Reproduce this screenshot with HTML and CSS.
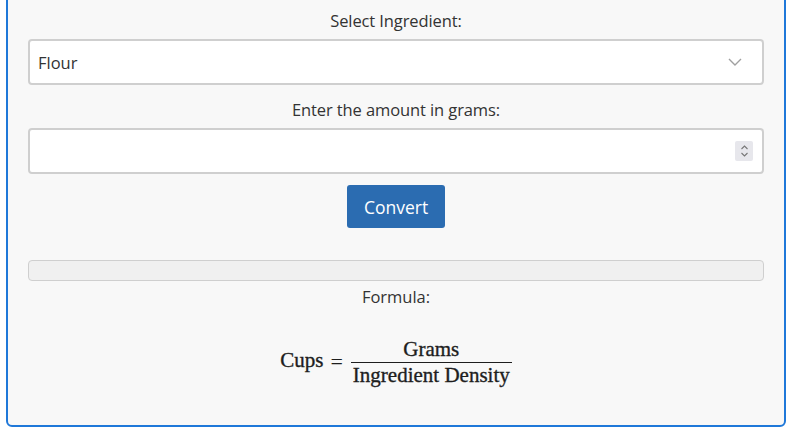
FILE: index.html
```html
<!DOCTYPE html>
<html lang="en">
<head>
<meta charset="utf-8">
<title>Grams to Cups</title>
<link rel="stylesheet" href="styles.css">
</head>
<body>
<div class="card">
  <label class="label" for="ingredient">Select Ingredient:</label>
  <div class="field">
    <select id="ingredient" class="field-control">
      <option>Flour</option>
      <option>Sugar</option>
      <option>Butter</option>
    </select>
    <svg class="chevron" width="14" height="8" viewBox="0 0 14 8"><path d="M1 1 L7 7 L13 1" fill="none" stroke="#a0a0a0" stroke-width="1.4"/></svg>
  </div>
  <label class="label label-second" for="grams">Enter the amount in grams:</label>
  <div class="field">
    <input id="grams" class="field-control" type="text">
    <span class="spinner">
      <svg width="9" height="14" viewBox="0 0 9 14"><path d="M1.5 5 L4.5 2 L7.5 5" fill="none" stroke="#777" stroke-width="1.1"/><path d="M1.5 9 L4.5 12 L7.5 9" fill="none" stroke="#777" stroke-width="1.1"/></svg>
    </span>
  </div>
  <div class="actions">
    <button class="btn" type="button">Convert</button>
  </div>
  <div class="result"></div>
  <div class="formula-label">Formula:</div>
  <div class="formula">
    <span class="word">Cups</span>
    <span class="eq">=</span>
    <span class="frac">
      <span class="num">Grams</span>
      <span class="den">Ingredient Density</span>
    </span>
  </div>
</div>
</body>
</html>
```
FILE: styles.css
```css
html, body {
  margin: 0;
  padding: 0;
  background: #ffffff;
}
body {
  font-family: "Open Sans", "Noto Sans", sans-serif;
  color: #333333;
  overflow: hidden;
}
.card {
  margin: -12px 5px 0 6px;
  border: 2px solid #1f78d9;
  border-radius: 6px;
  background: #f8f8f8;
  padding: 19px 20px 38px 20px;
  display: flex;
  flex-direction: column;
}
.label {
  display: block;
  text-align: center;
  font-size: 16.5px;
  line-height: 24px;
  margin-bottom: 6px;
  letter-spacing: -0.1px;
}
.label-second {
  margin-top: 13px;
}
.field {
  display: flex;
  align-items: center;
  height: 42px;
  border: 2px solid #cfcfcf;
  border-radius: 4px;
  background: #ffffff;
  padding: 0 9px 0 0;
}
.field-control {
  flex: 1;
  height: 100%;
  border: none;
  outline: none;
  background: transparent;
  font-family: "Open Sans", "Noto Sans", sans-serif;
  font-size: 16.5px;
  color: #333333;
  padding: 0 0 0 8px;
  appearance: none;
  -webkit-appearance: none;
}
.chevron {
  margin-right: 11px;
}
.spinner {
  width: 18px;
  height: 20px;
  background: #e7e7ec;
  border-radius: 2px;
  display: flex;
  align-items: center;
  justify-content: center;
}
.actions {
  display: flex;
  justify-content: center;
  margin-top: 11px;
}
.btn {
  width: 98px;
  height: 43px;
  background: #2b6cb1;
  color: #ffffff;
  border: none;
  border-radius: 3px;
  font-family: "Open Sans", "Noto Sans", sans-serif;
  font-size: 17.5px;
  padding: 0;
}
.result {
  margin-top: 32px;
  height: 19px;
  border: 1px solid #cfcfcf;
  border-radius: 4px;
  background: #f0f0f0;
}
.formula-label {
  text-align: center;
  font-size: 16.5px;
  line-height: 24px;
  margin-top: 4px;
}
.formula {
  display: flex;
  justify-content: center;
  align-items: center;
  margin-top: 27px;
  font-family: "Liberation Serif", "Times New Roman", serif;
  font-size: 21px;
  color: #1e1e1e;
  -webkit-text-stroke: 0.35px #1e1e1e;
}
.word {
  margin-right: 7px;
  position: relative;
  top: -1px;
}
.eq {
  margin-right: 8px;
  font-size: 22px;
  -webkit-text-stroke: 0;
}
.frac {
  display: inline-flex;
  flex-direction: column;
  align-items: center;
}
.num {
  line-height: 26px;
  padding: 0 2px;
}
.den {
  line-height: 24px;
  border-top: 1px solid #1e1e1e;
  padding: 0 2px 0;
}
```
